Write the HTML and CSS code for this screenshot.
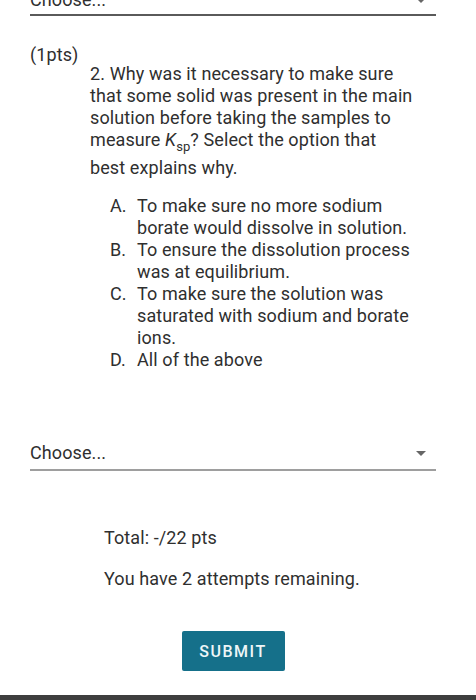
FILE: index.html
```html
<!DOCTYPE html>
<html lang="en">
<head>
  <meta charset="UTF-8">
  <title>Quiz</title>
  <meta name="viewport" content="width=device-width, initial-scale=1.0">
  <link rel="stylesheet" href="styles.css">
</head>
<body>

  <div class="page">
    <div class="select select-top">
      <span class="select-label">Choose...</span>
      <span class="caret"></span>
    </div>

    <div class="question">
      <div class="points">(1pts)</div>
      <div class="prompt">
        2. Why was it necessary to make sure that some solid was present in the main
        solution before taking the samples to measure <i>K</i><sub>sp</sub>? Select the option that<br>
        best explains why.
      </div>
      <ol class="options">
        <li>To make sure no more sodium borate would dissolve in solution.</li>
        <li>To ensure the dissolution process was at equilibrium.</li>
        <li>To make sure the solution was saturated with sodium and borate ions.</li>
        <li>All of the above</li>
      </ol>
    </div>

    <div class="select select-answer">
      <span class="select-label">Choose...</span>
      <span class="caret"></span>
    </div>

    <div class="summary">
      <p>Total: -/22 pts</p>
      <p>You have 2 attempts remaining.</p>
    </div>

    <div class="actions">
      <button class="submit">SUBMIT</button>
    </div>
  </div>

  <div class="bottom-bar"></div>

</body>
</html>
```

FILE: styles.css
```css
* { box-sizing: border-box; margin: 0; padding: 0; }
html, body { height: 100%; }
body {
  background: #fff;
  font-family: Roboto, "Liberation Sans", sans-serif;
  font-size: 18px;
  line-height: 22px;
  letter-spacing: 0.1px;
  color: #2f2f2f;
  overflow: hidden;
  position: relative;
}
.page {
  padding: 0 40px 0 30px;
}

.select {
  display: flex;
  align-items: center;
  justify-content: space-between;
  height: 30px;
  padding-right: 10px;
  border-bottom: 2px solid #9e9e9e;
}
.select-top {
  margin-top: -14px;
  border-bottom-color: #5a5a5a;
}
.select-answer {
  margin-top: 70px;
  padding-bottom: 4px;
}
.caret {
  width: 0;
  height: 0;
  border-left: 5px solid transparent;
  border-right: 5px solid transparent;
  border-top: 5px solid #666;
}

.question { margin-top: 29px; }
.points { line-height: 20px; }
.prompt {
  margin: -2px 14px 0 60px;
}
.prompt sub {
  font-size: 13px;
  line-height: 20px;
  vertical-align: -5px;
}
.options {
  list-style: none;
  counter-reset: opt;
  margin: 16px 14px 0 80px;
}
.options li {
  counter-increment: opt;
  display: grid;
  grid-template-columns: 27px 1fr;
}
.options li::before {
  content: counter(opt, upper-alpha) ".";
}

.summary {
  margin: 56px 0 0 74px;
}
.summary p + p { margin-top: 19px; }

.actions {
  display: flex;
  justify-content: center;
  margin-top: 41px;
}
.submit {
  width: 103px;
  height: 40px;
  border: none;
  border-radius: 2px;
  background: #15708a;
  color: #eef6f8;
  font-family: Roboto, "Liberation Sans", sans-serif;
  font-size: 16px;
  font-weight: 500;
  letter-spacing: 1.5px;
  cursor: pointer;
}

.bottom-bar {
  position: absolute;
  left: 0;
  right: 0;
  bottom: 0;
  height: 5px;
  background: #3e3e3e;
}
```
